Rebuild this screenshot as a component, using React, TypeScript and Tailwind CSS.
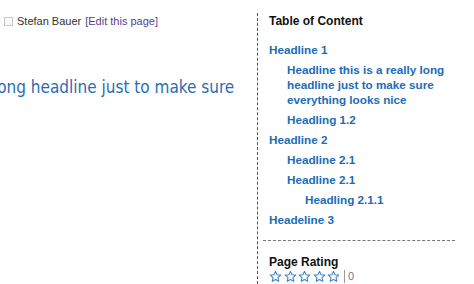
import React from 'react'

const toc = [
  { label: 'Headline 1', level: 0 },
  { label: 'Headline this is a really long headline just to make sure everything looks nice', level: 1 },
  { label: 'Headling 1.2', level: 1 },
  { label: 'Headline 2', level: 0 },
  { label: 'Headline 2.1', level: 1 },
  { label: 'Headline 2.1', level: 1 },
  { label: 'Headling 2.1.1', level: 2 },
  { label: 'Headeline 3', level: 0 },
]

function Star() {
  return (
    <svg width="13" height="13" viewBox="0 0 24 24" className="shrink-0">
      <path
        d="M12 2.5l2.9 6.3 6.8.7-5.1 4.6 1.5 6.8L12 17.4l-6.1 3.5 1.5-6.8-5.1-4.6 6.8-.7z"
        fill="none"
        stroke="#3d84c6"
        strokeWidth="2"
        strokeLinejoin="round"
      />
    </svg>
  )
}

export default function App() {
  return (
    <div className="flex h-[284px] w-[474px] overflow-hidden bg-white">
      {/* main column */}
      <div className="w-[257px] shrink-0 overflow-hidden">
        <div className="flex items-center gap-[4px] pl-[4px] pt-[13px] text-[11px] font-['Liberation_Sans',sans-serif] text-[#333]">
          <span className="inline-block h-[9px] w-[9px] border border-[#c8c8c8] bg-[#fafafa]" />
          <span>Stefan Bauer</span>
          <span className="text-[#5a3f93]">[Edit this page]</span>
        </div>
        <div className="-ml-[7px] mt-[47px] whitespace-nowrap text-[17px] leading-[20px] text-[#2a6db4] font-['DejaVu_Sans_Condensed','Liberation_Sans',sans-serif]">
          long headline just to make sure
        </div>
      </div>

      {/* sidebar */}
      <div className="mt-[13px] w-[200px] shrink-0 border-l border-dashed border-[#555] pl-[5px] font-['Liberation_Sans',Arial,sans-serif]">
        <div className="pl-[6px] pt-[1px] text-[12px] font-bold leading-[15px] text-[#111]">Table of Content</div>
        <ul className="mt-[13px] flex flex-col gap-[5px] pl-[6px] text-[11.7px] font-bold leading-[15px] text-[#1c6cb7]">
          {toc.map((item, i) => (
            <li
              key={i}
              className={item.level === 0 ? '' : item.level === 1 ? 'pl-[18px] pr-[8px]' : 'pl-[36px]'}
            >
              {item.label}
            </li>
          ))}
        </ul>
        <div className="mr-[2px] mt-[13px] border-t border-dashed border-[#777]" />
        <div className="pl-[6px] pt-[14px] text-[12px] font-bold leading-[14px] text-[#111]">Page Rating</div>
        <div className="flex items-center gap-[1.5px] pl-[6px] pt-[1px]">
          <Star />
          <Star />
          <Star />
          <Star />
          <Star />
          <span className="ml-[2px] h-[13px] w-px bg-[#999]" />
          <span className="ml-[2px] text-[11px] leading-[13px] text-[#777]">0</span>
        </div>
      </div>
    </div>
  )
}
